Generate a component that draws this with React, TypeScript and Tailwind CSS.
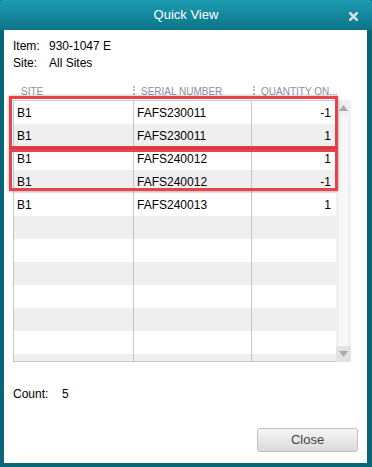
import React from "react";

const rows = [
  { site: "B1", serial: "FAFS230011", qty: "-1" },
  { site: "B1", serial: "FAFS230011", qty: "1" },
  { site: "B1", serial: "FAFS240012", qty: "1" },
  { site: "B1", serial: "FAFS240012", qty: "-1" },
  { site: "B1", serial: "FAFS240013", qty: "1" },
];

const filler = Array.from({ length: 7 }, () => ({ site: "", serial: "", qty: "" }));

function HeaderSep() {
  return <div className="h-[12px] w-0 border-l-2 border-dotted border-[#b5b8c2]" />;
}

export default function App() {
  const all = [...rows, ...filler];
  return (
    <div
      className="flex h-[467px] w-[372px] flex-col bg-[#0a6676] pb-[4px] pl-[4px] pr-[5px]"
      style={{ fontFamily: '"Liberation Sans", Arial, sans-serif' }}
    >
      {/* title bar */}
      <div className="relative -ml-[4px] -mr-[5px] flex h-[30px] shrink-0 items-center justify-center rounded-t-[3px] bg-gradient-to-b from-[#1c9cb2] to-[#0d7487]">
        <span className="text-[13px] text-white">Quick View</span>
        <svg className="absolute right-[14px] top-[12px]" width="9" height="9" viewBox="0 0 9 9">
          <path d="M1.2 1.2 L7.8 7.8 M7.8 1.2 L1.2 7.8" stroke="#d9e0e3" strokeWidth="2.6" strokeLinecap="square" />
        </svg>
      </div>

      <div className="flex flex-1 flex-col bg-white px-[9px] pt-[8px] pb-[11px] text-[12px] text-black">
        <div className="flex leading-[17px]">
          <span className="w-[36px]">Item:</span>
          <span>930-1047 E</span>
        </div>
        <div className="flex leading-[17px]">
          <span className="w-[36px]">Site:</span>
          <span>All Sites</span>
        </div>

        {/* column headers */}
        <div className="mt-[11px] flex h-[17px] items-center text-[10px] uppercase text-[#8a8fa2]">
          <div className="flex w-[120px] items-center pl-[8px]">SITE</div>
          <HeaderSep />
          <div className="flex w-[118px] items-center pl-[6px]">Serial Number</div>
          <HeaderSep />
          <div className="pl-[6px]">Quantity On...</div>
        </div>

        {/* grid */}
        <div className="relative flex w-[338px]">
          <div className="h-[262px] w-[323px] overflow-hidden border border-r-0 border-[#c6c6c6]">
            {all.map((r, i) => (
              <div
                key={i}
                className={`flex h-[23px] items-center ${i % 2 === 1 ? "bg-[#efefef]" : "bg-white"}`}
              >
                <div className="flex h-full w-[120px] items-center border-r border-[#c6c6c6] pl-[3px]">{r.site}</div>
                <div className="flex h-full w-[118px] items-center border-r border-[#c6c6c6] pl-[3px]">{r.serial}</div>
                <div className="flex h-full flex-1 items-center justify-end pr-[5px]">{r.qty}</div>
              </div>
            ))}
          </div>
          {/* scrollbar */}
          <div className="flex h-[262px] w-[15px] flex-col bg-[#f0f0f0]">
            <div className="flex h-[16px] items-center justify-center">
              <svg width="9" height="6" viewBox="0 0 9 6">
                <path d="M4.5 0 L9 6 L0 6 Z" fill="#a9a9a9" />
              </svg>
            </div>
            <div className="mx-auto w-[9px] flex-1 bg-[#f7f7f7]" />
            <div className="flex h-[16px] items-center justify-center bg-[#e2e2e2]">
              <svg width="9" height="6" viewBox="0 0 9 6">
                <path d="M0 0 L9 0 L4.5 6 Z" fill="#a9a9a9" />
              </svg>
            </div>
          </div>

          {/* annotation boxes */}
          <div className="absolute -left-[4px] -top-[4px] h-[53px] w-[329px] border-[3px] border-[#e8424a] shadow-[0_0_3px_rgba(0,0,0,0.35)]" />
          <div className="absolute -left-[4px] top-[49px] h-[42px] w-[329px] border-[3px] border-[#e8424a] shadow-[0_0_3px_rgba(0,0,0,0.35)]" />
        </div>

        <div className="mt-[24px] flex leading-[17px]">
          <span className="w-[49px]">Count:</span>
          <span>5</span>
        </div>

        <div className="mt-auto flex justify-end">
          <button className="h-[24px] w-[101px] rounded-[3px] border border-[#c2c2c2] bg-gradient-to-b from-[#f6f6f6] to-[#dadada] text-[13px] text-[#454545]">
            Close
          </button>
        </div>
      </div>
    </div>
  );
}
